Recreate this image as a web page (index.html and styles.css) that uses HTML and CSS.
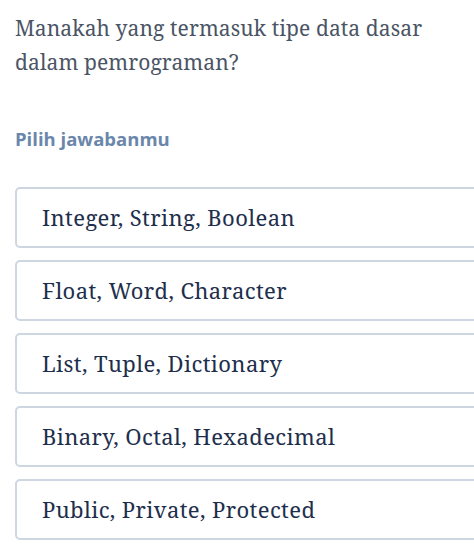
FILE: index.html
```html
<!DOCTYPE html>
<html lang="id">
<head>
<meta charset="utf-8">
<title>Kuis</title>
<link rel="stylesheet" href="styles.css">
</head>
<body>
<main class="quiz">
  <h1 class="question">Manakah yang termasuk tipe data dasar dalam pemrograman?</h1>
  <p class="label">Pilih jawabanmu</p>
  <ul class="options">
    <li class="option">Integer, String, Boolean</li>
    <li class="option">Float, Word, Character</li>
    <li class="option">List, Tuple, Dictionary</li>
    <li class="option">Binary, Octal, Hexadecimal</li>
    <li class="option">Public, Private, Protected</li>
  </ul>
</main>
</body>
</html>
```

FILE: styles.css
```css
html, body {
  margin: 0;
  padding: 0;
  background: #ffffff;
}
.quiz {
  width: 474px;
  height: 556px;
  box-sizing: border-box;
  padding: 11px 0 0 15px;
  overflow: hidden;
}
.question {
  margin: 0;
  font-family: "Noto Serif", "DejaVu Serif", serif;
  font-weight: 400;
  font-size: 21px;
  line-height: 34px;
  letter-spacing: 0.1px;
  color: #4b5565;
  max-width: 430px;
}
.label {
  margin: 48px 0 0 0;
  font-family: "Open Sans", sans-serif;
  font-weight: 700;
  font-size: 18.5px;
  line-height: 24px;
  color: #6a87ab;
}
.options {
  list-style: none;
  margin: 36px -30px 0 0;
  padding: 0;
  display: flex;
  flex-direction: column;
  gap: 12px;
}
.option {
  box-sizing: border-box;
  height: 61px;
  border: 2px solid #cdd6e1;
  border-radius: 5px;
  padding: 0 0 2px 25px;
  display: flex;
  align-items: center;
  font-family: "Noto Serif", "DejaVu Serif", serif;
  font-size: 22px;
  letter-spacing: 0.4px;
  color: #1e2f4d;
}
```
